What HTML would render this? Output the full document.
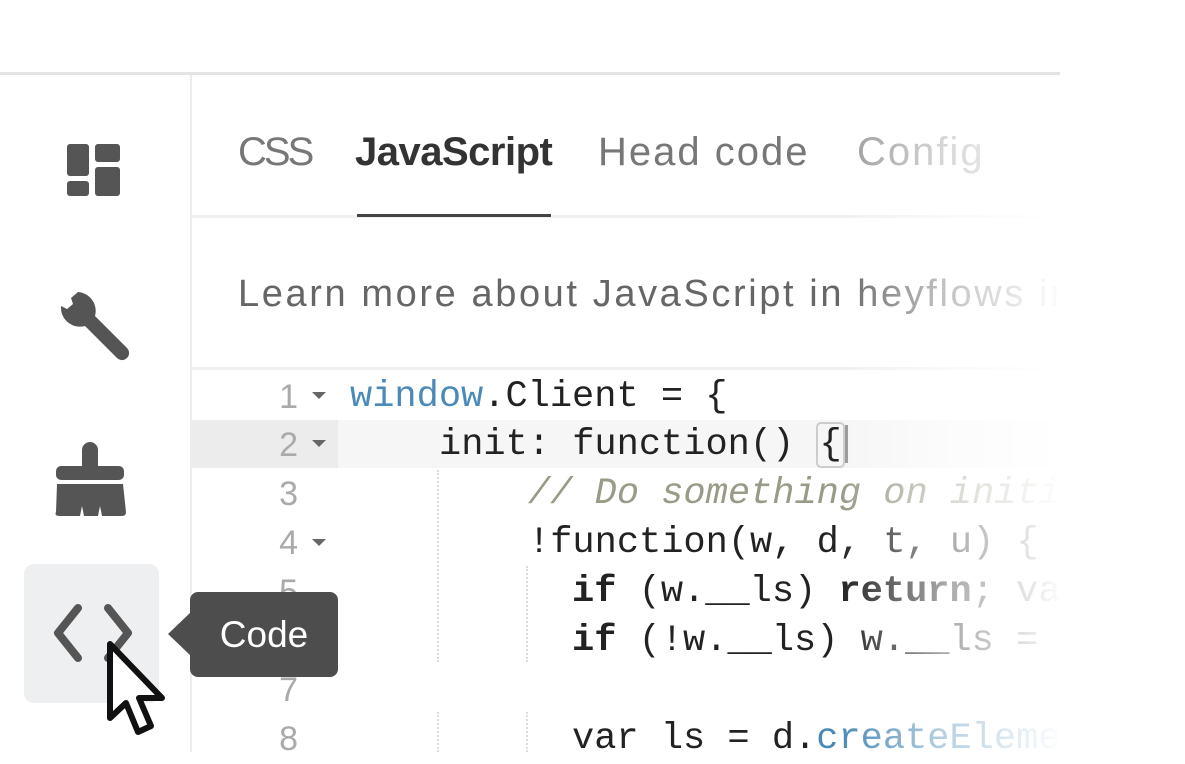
<!DOCTYPE html>
<html><head><meta charset="utf-8"><style>
*{margin:0;padding:0;box-sizing:border-box}
body{width:1185px;height:752px;overflow:hidden;background:#fff;position:relative;font-family:"Liberation Sans",sans-serif}
.a{position:absolute;white-space:nowrap}
.mono{font-family:"Liberation Mono",monospace;font-size:37px;color:#222;line-height:49px}
.ln{font-family:"Liberation Sans",sans-serif;font-size:34px;color:#aaa;width:108px;text-align:right;left:190px;line-height:49px}
.fold{width:0;height:0;border-left:7px solid transparent;border-right:7px solid transparent;border-top:7px solid #666}
.guide{border-left:2px dotted #ddd;width:0}
</style></head><body>
<div class="a" style="left:0;top:72px;width:1060px;height:3px;background:#e4e4e4"></div>
<div class="a" style="left:190px;top:75px;width:2px;height:677px;background:#ececec"></div>
<!-- tabs -->
<div class="a" style="left:238px;top:130px;font-size:40px;color:#777;letter-spacing:-3px">CSS</div>
<div class="a" style="left:355px;top:130px;font-size:40px;color:#333;font-weight:600;letter-spacing:-0.5px">JavaScript</div>
<div class="a" style="left:598px;top:130px;font-size:40px;color:#777;letter-spacing:2px">Head code</div>
<div class="a" style="left:857px;top:130px;font-size:40px;color:#999;letter-spacing:2px">Config</div>
<div class="a" style="left:192px;top:215px;width:880px;height:3px;background:#f0f0f0"></div>
<div class="a" style="left:357px;top:214px;width:194px;height:3px;background:#444"></div>
<div class="a" style="left:238px;top:273px;font-size:38px;color:#666;letter-spacing:2.6px">Learn more about JavaScript in heyflows in</div>
<div class="a" style="left:192px;top:367px;width:880px;height:3px;background:#f0f0f0"></div>
<!-- code -->
<div class="a" style="left:192px;top:420px;width:146px;height:48px;background:#ececec"></div>
<div class="a" style="left:338px;top:420px;width:740px;height:48px;background:#f6f6f6"></div>
<div class="a guide" style="left:437px;top:470px;height:192px"></div>
<div class="a guide" style="left:437px;top:712px;height:40px"></div>
<div class="a guide" style="left:526px;top:566px;height:96px"></div>
<div class="a guide" style="left:526px;top:712px;height:40px"></div>
<div class="a ln" style="top:373px">1</div>
<div class="a ln" style="top:421px">2</div>
<div class="a ln" style="top:470px">3</div>
<div class="a ln" style="top:519px">4</div>
<div class="a ln" style="top:568px">5</div>
<div class="a ln" style="top:666px">7</div>
<div class="a ln" style="top:715px">8</div>
<div class="a fold" style="left:312px;top:392px"></div>
<div class="a fold" style="left:312px;top:440px"></div>
<div class="a fold" style="left:312px;top:539px"></div>
<div class="a mono" style="left:350px;top:373px"><span style="color:#4a8ab8">window</span>.Client = {</div>
<div class="a mono" style="left:439px;top:421px">init: function() <span style="border:2px solid #ccc;border-radius:5px;padding:0 1px">{</span><span style="display:inline-block;width:3px;height:38px;background:#999;vertical-align:middle"></span></div>
<div class="a mono" style="left:528px;top:470px;color:#999a88;font-style:italic">// Do something on initi</div>
<div class="a mono" style="left:528px;top:519px">!function(w, d, t, u) {</div>
<div class="a mono" style="left:572px;top:568px"><b>if</b> (w.__ls) <b>return</b>; var</div>
<div class="a mono" style="left:572px;top:617px"><b>if</b> (!w.__ls) w.__ls = f</div>
<div class="a mono" style="left:572px;top:715px">var ls = d.<span style="color:#4a8ab8">createElemen</span></div>
<!-- fade -->
<div class="a" style="left:840px;top:100px;width:345px;height:652px;background:linear-gradient(to right,rgba(255,255,255,0) 0%,rgba(255,255,255,0.6) 30%,rgba(255,255,255,1) 65%)"></div>
<div class="a" style="left:1060px;top:0;width:125px;height:752px;background:#fff"></div>
<!-- sidebar icons -->
<svg class="a" style="left:66px;top:142px" width="56" height="56" viewBox="0 0 56 56" fill="#555">
<rect x="1" y="2" width="22" height="32" rx="3"/><rect x="29" y="2" width="25" height="18" rx="3"/>
<rect x="1" y="39" width="22" height="15" rx="3"/><rect x="29" y="25" width="25" height="29" rx="3"/></svg>
<svg class="a" style="left:55px;top:286px" width="78" height="78" viewBox="0 0 78 78" fill="#555">
<path d="M6 23 A19 19 0 0 0 30 40 L62 72 A6 6 0 0 0 72 62 L40 30 A19 19 0 0 0 23 6 L16 12 L18 18 L12 23 L6 20 Z"/></svg>
<svg class="a" style="left:54px;top:442px" width="74" height="76" viewBox="0 0 74 76" fill="#555">
<rect x="28" y="0" width="16" height="32" rx="8"/><rect x="2" y="24" width="68" height="14" rx="5"/>
<path d="M3 42 H69 L72 70 Q72 74 68 74 H48 L46 64 L44 74 H30 L28 64 L26 74 H6 Q0 74 2 70 Z"/></svg>
<div class="a" style="left:24px;top:564px;width:135px;height:139px;background:#eeeff1;border-radius:10px"></div>
<svg class="a" style="left:48px;top:600px" width="88" height="70" viewBox="0 0 88 70" fill="none" stroke="#555" stroke-width="8" stroke-linecap="round" stroke-linejoin="round">
<path d="M30 8 L10 33 L30 58"/><path d="M60 8 L80 33 L60 58"/></svg>
<!-- tooltip -->
<div class="a" style="left:190px;top:592px;width:148px;height:85px;background:#4d4d4d;border-radius:8px"></div>
<div class="a" style="left:168px;top:612px;width:0;height:0;border-top:22px solid transparent;border-bottom:22px solid transparent;border-right:23px solid #4d4d4d"></div>
<div class="a" style="left:190px;top:614px;width:148px;text-align:center;color:#fff;font-size:37px">Code</div>
<!-- cursor -->
<svg class="a" style="left:100px;top:636px" width="75" height="110" viewBox="0 0 75 110">
<path d="M10 8 L10 82 L26 67 L38 96 L51 90 L39 62 L62 62 Z" fill="#fff" stroke="#111" stroke-width="6" stroke-linejoin="round"/></svg>
</body></html>
